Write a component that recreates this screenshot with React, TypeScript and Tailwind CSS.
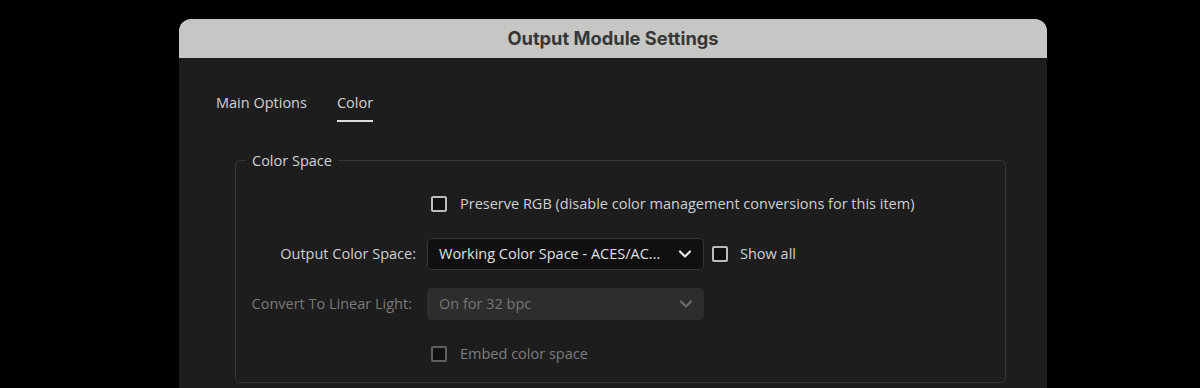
import React from 'react';

const font = { fontFamily: '"Open Sans", "Noto Sans", sans-serif' };

const Chevron: React.FC<{ className?: string }> = ({ className }) => (
  <svg width="16" height="16" viewBox="0 0 16 16" className={className} fill="none">
    <path d="M3 5.5l5 5 5-5" stroke="currentColor" strokeWidth="2.2" strokeLinecap="round" strokeLinejoin="round" />
  </svg>
);

const Checkbox: React.FC<{ disabled?: boolean }> = ({ disabled }) => (
  <span
    className={`inline-block w-[16px] h-[16px] rounded-[2px] border-2 bg-[#111] shrink-0 ${
      disabled ? 'border-[#5f5f5f]' : 'border-[#bdbdbd]'
    }`}
  />
);

const Row: React.FC<{ label?: string; disabled?: boolean; children: React.ReactNode }> = ({ label, disabled, children }) => (
  <div className="flex items-center h-[50px]">
    <div className={`w-[180px] text-right ${disabled ? 'text-[#7a7a7a] pr-[4px]' : 'text-[#cfcfcf]'}`}>{label}</div>
    <div className="ml-[11px] flex items-center">{children}</div>
  </div>
);

export default function App() {
  return (
    <div className="min-h-screen bg-black pt-[19px] overflow-hidden" style={font}>
      <div className="ml-[179px] w-[868px] rounded-t-[12px] overflow-hidden">
        <div className="h-[39px] bg-[#c6c6c4] flex items-center justify-center">
          <span className="text-[18.3px] font-bold text-[#373737]" style={{ fontFamily: 'Inter, "Liberation Sans", sans-serif' }}>
            Output Module Settings
          </span>
        </div>
        <div className="bg-[#1d1d1d] h-[340px] pl-[37px] pr-[41px] text-[14.5px]">
          <div className="flex gap-[30px] pt-[34px] text-[#d2d2d2]">
            <div className="pb-[6px]">Main Options</div>
            <div className="pb-[6px] border-b-2 border-[#dcdcdc]">Color</div>
          </div>
          <fieldset className="ml-[19px] mt-[29px] border border-[#363636] rounded-[5px] pb-[3px]">
            <legend className="ml-[10px] px-[6px] text-[#d2d2d2] leading-[20px]">Color Space</legend>
            <div className="pt-[8px]">
              <Row>
                <span className="ml-[4px] flex items-center gap-[13px] text-[#d0d0d0]">
                  <Checkbox />
                  Preserve RGB (disable color management conversions for this item)
                </span>
              </Row>
              <Row label="Output Color Space:">
                <div className="w-[277px] h-[32px] rounded-[5px] bg-[#101010] border border-[#353535] flex items-center justify-between pl-[11px] pr-[10px] text-[#e0e0e0]">
                  <span>Working Color Space - ACES/AC...</span>
                  <Chevron className="text-[#e6e6e6]" />
                </div>
                <span className="ml-[8px] flex items-center gap-[12px] text-[#d0d0d0]">
                  <Checkbox />
                  Show all
                </span>
              </Row>
              <Row label="Convert To Linear Light:" disabled>
                <div className="w-[277px] h-[32px] rounded-[5px] bg-[#2d2d2d] flex items-center justify-between pl-[12px] pr-[10px] text-[#767676]">
                  <span>On for 32 bpc</span>
                  <Chevron className="text-[#6a6a6a]" />
                </div>
              </Row>
              <Row disabled>
                <span className="ml-[4px] flex items-center gap-[13px] text-[#7e7e7e]">
                  <Checkbox disabled />
                  Embed color space
                </span>
              </Row>
            </div>
          </fieldset>
        </div>
      </div>
    </div>
  );
}
